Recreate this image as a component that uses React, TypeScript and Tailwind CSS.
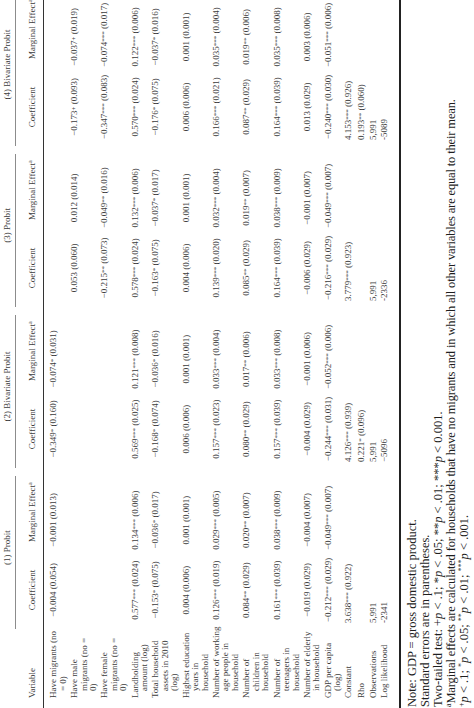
import React from "react";

type Row = { label: string[]; v: string[]; stat?: boolean };

const rows: Row[] = [
  {
    label: ["Have migrants (no", "= 0)"],
    v: ["−0.004 (0.054)", "−0.001 (0.013)", "−0.349* (0.160)", "−0.074* (0.031)", "", "", "", ""],
  },
  {
    label: ["Have male", "migrants (no =", "0)"],
    v: ["", "", "", "", "0.053 (0.060)", "0.012 (0.014)", "−0.173+ (0.093)", "−0.037+ (0.019)"],
  },
  {
    label: ["Have female", "migrants (no =", "0)"],
    v: ["", "", "", "", "−0.215** (0.073)", "−0.049** (0.016)", "−0.347*** (0.083)", "−0.074*** (0.017)"],
  },
  {
    label: ["Landholding", "amount (log)"],
    v: ["0.577*** (0.024)", "0.134*** (0.006)", "0.569*** (0.025)", "0.121*** (0.008)", "0.578*** (0.024)", "0.132*** (0.006)", "0.570*** (0.024)", "0.122*** (0.006)"],
  },
  {
    label: ["Total household", "assets in 2010", "(log)"],
    v: ["−0.153* (0.075)", "−0.036* (0.017)", "−0.168* (0.074)", "−0.036* (0.016)", "−0.163* (0.075)", "−0.037* (0.017)", "−0.176* (0.075)", "−0.037* (0.016)"],
  },
  {
    label: ["Highest education", "years in", "household"],
    v: ["0.004 (0.006)", "0.001 (0.001)", "0.006 (0.006)", "0.001 (0.001)", "0.004 (0.006)", "0.001 (0.001)", "0.006 (0.006)", "0.001 (0.001)"],
  },
  {
    label: ["Number of working", "age people in", "household"],
    v: ["0.126*** (0.019)", "0.029*** (0.005)", "0.157*** (0.023)", "0.033*** (0.004)", "0.139*** (0.020)", "0.032*** (0.004)", "0.166*** (0.021)", "0.035*** (0.004)"],
  },
  {
    label: ["Number of", "children in", "household"],
    v: ["0.084** (0.029)", "0.020** (0.007)", "0.080** (0.029)", "0.017** (0.006)", "0.085** (0.029)", "0.019** (0.007)", "0.087** (0.029)", "0.019** (0.006)"],
  },
  {
    label: ["Number of", "teenagers in", "household"],
    v: ["0.161*** (0.039)", "0.038*** (0.009)", "0.157*** (0.039)", "0.033*** (0.008)", "0.164*** (0.039)", "0.038*** (0.009)", "0.164*** (0.039)", "0.035*** (0.008)"],
  },
  {
    label: ["Number of elderly", "in household"],
    v: ["−0.019 (0.029)", "−0.004 (0.007)", "−0.004 (0.029)", "−0.001 (0.006)", "−0.006 (0.029)", "−0.001 (0.007)", "0.013 (0.029)", "0.003 (0.006)"],
  },
  {
    label: ["GDP per capita", "(log)"],
    v: ["−0.212*** (0.029)", "−0.049*** (0.007)", "−0.244*** (0.031)", "−0.052*** (0.006)", "−0.216*** (0.029)", "−0.049*** (0.007)", "−0.240*** (0.030)", "−0.051*** (0.006)"],
  },
  {
    label: ["Constant"],
    stat: true,
    v: ["3.638*** (0.922)", "", "4.126*** (0.939)", "", "3.779*** (0.923)", "", "4.153*** (0.926)", ""],
  },
  { label: ["Rho"], stat: true, v: ["", "", "0.221* (0.096)", "", "", "", "0.193** (0.060)", ""] },
  { label: ["Observations"], stat: true, v: ["5,991", "", "5,991", "", "5,991", "", "5,991", ""] },
  { label: ["Log likelihood"], stat: true, v: ["-2341", "", "−5096", "", "-2336", "", "-5089", ""] },
];

const groups = ["(1) Probit", "(2) Bivariate Probit", "(3) Probit", "(4) Bivariate Probit"];

function Stars({ text }: { text: string }) {
  // coefficients carry their stars as small raised marks
  const m = text.match(/^([−\-]?[\d.,]+)([*+]*)(.*)$/);
  if (!m || !m[2]) return <>{text}</>;
  return (
    <>
      {m[1]}
      <span className="text-[7px] relative -top-[1px]">{m[2]}</span>
      {m[3]}
    </>
  );
}

function P() {
  return <span className="italic">p</span>;
}

export default function App() {
  return (
    <div className="w-[474px] h-[708px] overflow-hidden bg-white">
      {/* the page is a landscape table turned a quarter to the left */}
      <div className="w-[708px] h-[474px] origin-top-left translate-y-[708px] -rotate-90 font-['Liberation_Serif','Times_New_Roman',serif] text-[#3c3c3c]">
        <table className="table-fixed border-collapse w-[722px] text-[9px] leading-[9.5px]">
          <colgroup>
            <col className="w-[78px]" />
            <col className="w-[80px]" />
            <col className="w-[81px]" />
            <col className="w-[80px]" />
            <col className="w-[81px]" />
            <col className="w-[80px]" />
            <col className="w-[81px]" />
            <col className="w-[80px]" />
            <col className="w-[81px]" />
          </colgroup>
          <thead>
            <tr>
              <th className="p-0" />
              {groups.map((g) => (
                <th key={g} colSpan={2} className="p-0 pl-[1px] pr-[7px] font-normal">
                  <div className="h-[16px] pt-[2.5px] pl-[10px] border-b border-[#8c8c8c] text-center whitespace-nowrap">
                    {g}
                  </div>
                </th>
              ))}
            </tr>
            <tr>
              <th className="pl-[10px] pt-[12px] pb-[5.5px] text-left font-normal border-b-[1.5px] border-[#333]">
                Variable
              </th>
              {groups.map((g) => (
                <React.Fragment key={g}>
                  <th className="pt-[12px] pb-[5.5px] text-center font-normal border-b-[1.5px] border-[#333]">
                    Coefficient
                  </th>
                  <th className="pt-[12px] pb-[5.5px] pl-[8px] text-left font-normal border-b-[1.5px] border-[#333] whitespace-nowrap">
                    Marginal Effect<sup className="text-[6px]">a</sup>
                  </th>
                </React.Fragment>
              ))}
            </tr>
          </thead>
          <tbody>
            {rows.map((r, i) => {
              const first = i === 0;
              const last = i === rows.length - 1;
              const pad = first
                ? "pt-[5.25px] pb-[0.9px]"
                : last
                ? "pt-[0.9px] pb-[9.25px] border-b-2 border-[#222]"
                : "py-[0.9px]";
              return (
                <tr key={i}>
                  <td className={`align-top pl-[10px] whitespace-nowrap ${pad}`}>
                    {r.label.map((l, j) => (
                      <div key={j} className={j === 0 ? "" : "pl-[7px]"}>
                        {l}
                      </div>
                    ))}
                  </td>
                  {r.v.map((v, j) => (
                    <td
                      key={j}
                      className={`align-top whitespace-nowrap ${
                        r.stat ? "text-left pl-[7px]" : j % 2 === 1 ? "text-center pr-[21px]" : "text-center"
                      } ${pad}`}
                    >
                      <Stars text={v} />
                    </td>
                  ))}
                </tr>
              );
            })}
          </tbody>
        </table>
        <div className="pt-[5.5px] pl-[1px] text-[12.5px] leading-[12.8px] text-[#1e1e1e] whitespace-nowrap">
          <div>Note: GDP = gross domestic product.</div>
          <div>Standard errors are in parentheses.</div>
          <div>
            Two-tailed test: +<P /> &lt; .1; *<P /> &lt; .05; **<P /> &lt; .01; ***<P /> &lt; 0.001.
          </div>
          <div className="tracking-[-0.15px]">
            <sup className="text-[8px]">a</sup>Marginal effects are calculated for households that have no migrants and
            in which all other variables are equal to their mean.
          </div>
          <div>
            <sup className="text-[8px]">+</sup>
            <P /> &lt; .1; <sup className="text-[8px]">*</sup>
            <P /> &lt; .05; <sup className="text-[8px]">**</sup>
            <P /> &lt; .01; <sup className="text-[8px]">***</sup>
            <P /> &lt; .001.
          </div>
        </div>
      </div>
    </div>
  );
}
